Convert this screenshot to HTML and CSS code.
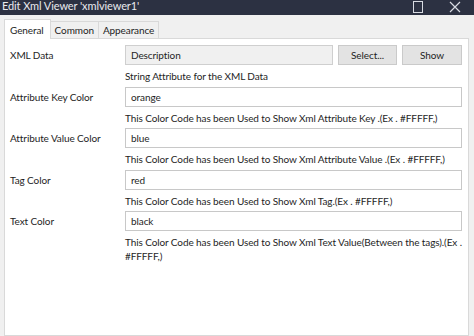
FILE: index.html
```html
<!DOCTYPE html>
<html lang="en">
<head>
    <meta charset="UTF-8">
    <title>Edit Xml Viewer</title>
    <link rel="stylesheet" href="styles.css">
</head>
<body>
    <div class="titlebar">
        <span class="title">Edit Xml Viewer 'xmlviewer1'</span>
        <div class="title-buttons">
            <svg class="max-icon" width="12" height="12" viewBox="0 0 12 12">
                <rect x="1.5" y="0.5" width="9" height="11" fill="none" stroke="#d8dbe2" stroke-width="1"/>
            </svg>
            <svg class="close-icon" width="12" height="12" viewBox="0 0 12 12">
                <path d="M1 1 L11 11 M11 1 L1 11" stroke="#d8dbe2" stroke-width="1.2"/>
            </svg>
        </div>
    </div>
    <div class="window">
        <div class="tabs">
            <div class="tab active">General</div>
            <div class="tab">Common</div>
            <div class="tab">Appearance</div>
        </div>
        <div class="panel">
            <div class="form">
                <label class="field-label">XML Data</label>
                <div class="field">
                    <div class="data-row">
                        <input class="text-input readonly" type="text" value="Description" readonly>
                        <button class="btn">Select...</button>
                        <button class="btn">Show</button>
                    </div>
                    <div class="hint">String Attribute for the XML Data</div>
                </div>

                <label class="field-label">Attribute Key Color</label>
                <div class="field">
                    <input class="text-input" type="text" value="orange">
                    <div class="hint">This Color Code has been Used to Show Xml Attribute Key .(Ex . #FFFFF,)</div>
                </div>

                <label class="field-label">Attribute Value Color</label>
                <div class="field">
                    <input class="text-input" type="text" value="blue">
                    <div class="hint">This Color Code has been Used to Show Xml Attribute Value .(Ex . #FFFFF,)</div>
                </div>

                <label class="field-label">Tag Color</label>
                <div class="field">
                    <input class="text-input" type="text" value="red">
                    <div class="hint">This Color Code has been Used to Show Xml Tag.(Ex . #FFFFF,)</div>
                </div>

                <label class="field-label">Text Color</label>
                <div class="field">
                    <input class="text-input" type="text" value="black">
                    <div class="hint">This Color Code has been Used to Show Xml Text Value(Between the tags).(Ex . #FFFFF,)</div>
                </div>
            </div>
        </div>
    </div>
</body>
</html>
```

FILE: styles.css
```css
html, body {
    margin: 0;
    padding: 0;
    height: 100%;
}
body {
    font-family: 'Lato', 'Noto Sans', sans-serif;
    font-size: 10px;
    letter-spacing: -0.1px;
    color: #1e1e1e;
    background: #f0f0f0;
    display: flex;
    flex-direction: column;
    overflow: hidden;
}
.titlebar {
    height: 15px;
    background: #2c3142;
    display: flex;
    justify-content: space-between;
    overflow: hidden;
    flex-shrink: 0;
}
.title {
    color: #e9eaee;
    font-size: 11px;
    line-height: 12px;
    margin-top: 0;
    padding-left: 2px;
    white-space: nowrap;
}
.title-buttons {
    display: flex;
    gap: 25px;
    padding-right: 13px;
    margin-top: 1px;
}
.window {
    flex: 1;
    display: flex;
    flex-direction: column;
    padding: 4px 4px 0 4px;
}
.tabs {
    display: flex;
    align-items: flex-end;
    height: 19px;
}
.tab {
    height: 16px;
    line-height: 16px;
    padding: 0 4px;
    border: 1px solid #d9d9d9;
    border-bottom: none;
    background: #f0f0f0;
    margin-left: -1px;
}
.tab.active {
    height: 19px;
    line-height: 21px;
    background: #fff;
    margin-left: 0;
    padding: 0 6px 0 5px;
    position: relative;
    z-index: 1;
    margin-bottom: -1px;
}
.panel {
    flex: 1;
    background: #fff;
    border: 1px solid #d9d9d9;
    margin-right: 1px;
}
.form {
    display: grid;
    grid-template-columns: 115px 1fr;
    padding: 6px 6px 0 5px;
}
.field-label {
    height: 20px;
    line-height: 20px;
}
.data-row {
    display: flex;
    gap: 5px;
}
.text-input {
    box-sizing: border-box;
    width: 100%;
    height: 20px;
    border: 1px solid #c8c8c8;
    padding: 0 5px;
    font-family: inherit;
    font-size: 10px;
    letter-spacing: -0.1px;
    color: #1e1e1e;
    background: #fff;
    outline: none;
    margin: 0;
    display: block;
}
.text-input.readonly {
    background: #f0f0f0;
    border-color: #cfcfcf;
    width: 208px;
}
.btn {
    box-sizing: border-box;
    height: 20px;
    width: 59px;
    border: 1px solid #cacaca;
    background: #e3e3e3;
    font-family: inherit;
    font-size: 10px;
    letter-spacing: -0.1px;
    color: #1e1e1e;
    padding: 0;
}
.btn + .btn {
    width: 60px;
}
.hint {
    line-height: 14px;
    padding: 4px 0 3.5px;
}
```
